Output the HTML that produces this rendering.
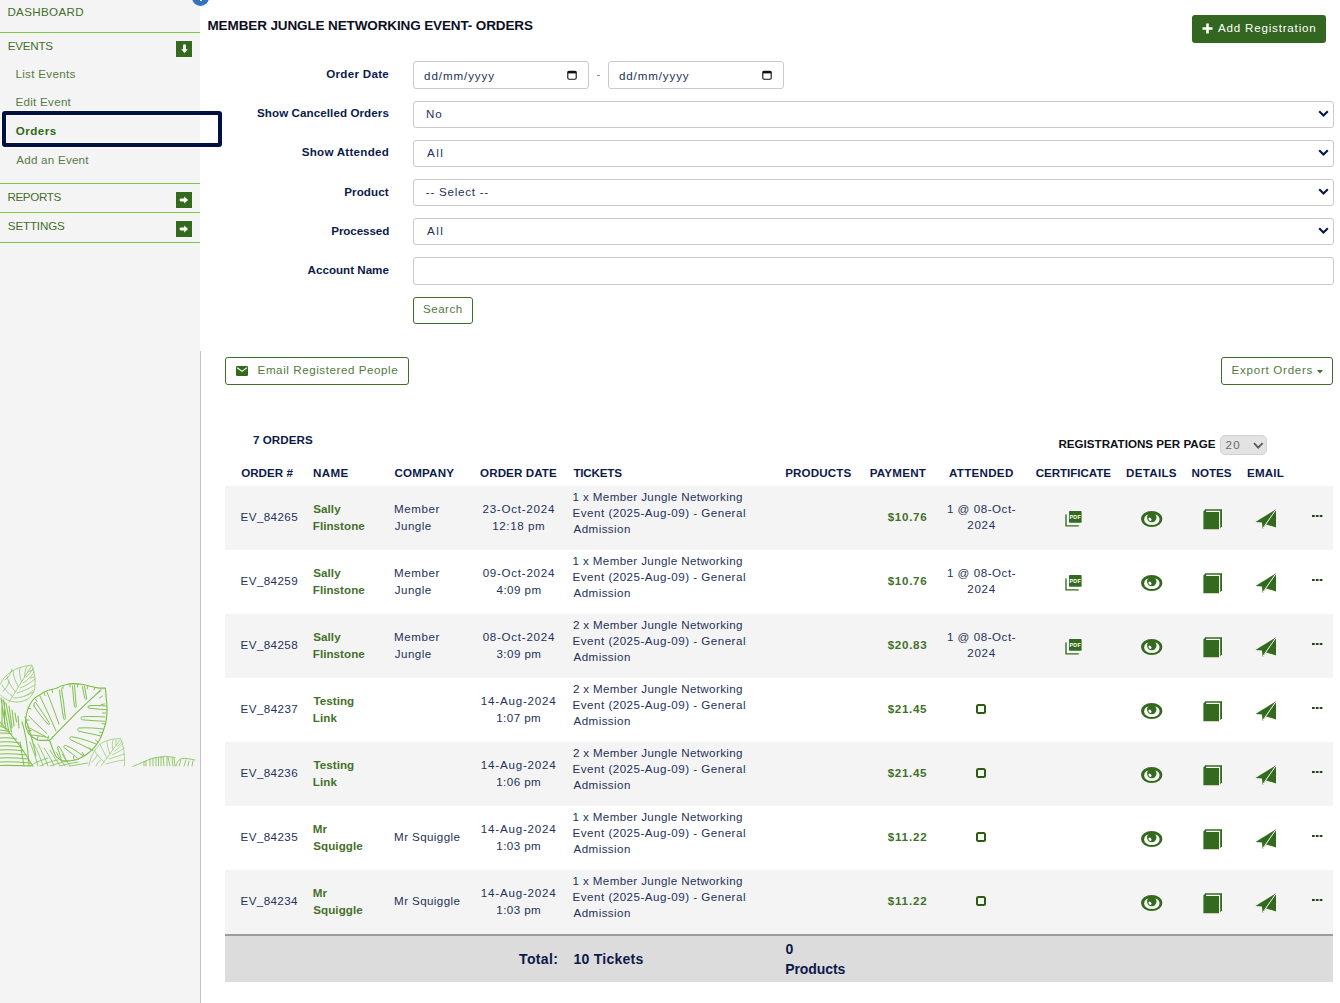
<!DOCTYPE html>
<html><head><meta charset="utf-8">
<style>
*{box-sizing:border-box;margin:0;padding:0}
html,body{width:1340px;height:1003px;overflow:hidden;background:#fff;font-family:"Liberation Sans",sans-serif}
.a{position:absolute}
.t{position:absolute;line-height:1;white-space:pre}
.sl{position:absolute;left:0;width:200px;height:1px;background:#84c344}
.si{position:absolute;left:176px;width:16px;height:16px;background:#336a1e}
.in{position:absolute;left:413px;border:1px solid #cacaca;border-radius:3px;background:#fff}
.bo{position:absolute;border:1px solid #3f6e2a;border-radius:3px;background:#fff}
</style></head><body>
<div class="a" style="left:0;top:0;width:200px;height:1003px;background:#f4f4f4"></div>
<div class="sl" style="top:32px"></div>
<div class="si" style="top:41px"><svg width="16" height="16" viewBox="0 0 16 16"><path d="M8.5 4.6V9.2" stroke="#fff" stroke-width="2.8" stroke-linecap="round"/><path d="M5.2 8.3L8.5 12L11.8 8.3Z" fill="#fff"/></svg></div>
<div class="sl" style="top:183px"></div>
<div class="si" style="top:192px"><svg width="16" height="16" viewBox="0 0 16 16"><path d="M5 8H9.2" stroke="#fff" stroke-width="2.9" stroke-linecap="round"/><path d="M8.2 4.6L12 8L8.2 11.4Z" fill="#fff"/></svg></div>
<div class="sl" style="top:212px"></div>
<div class="si" style="top:221px"><svg width="16" height="16" viewBox="0 0 16 16"><path d="M5 8H9.2" stroke="#fff" stroke-width="2.9" stroke-linecap="round"/><path d="M8.2 4.6L12 8L8.2 11.4Z" fill="#fff"/></svg></div>
<div class="sl" style="top:242px"></div>
<svg class="a" style="left:0;top:650px" width="200" height="118" viewBox="0 650 200 118">
<defs><clipPath id="lc"><rect x="0" y="650" width="200" height="116.8"/></clipPath></defs>
<g clip-path="url(#lc)" fill="none" stroke-linecap="round" stroke-linejoin="round">
<!-- small top-left leaf -->
<g stroke="#94cc6c" stroke-width="0.85">
<path d="M0.5 684C4 675 14 667 31.7 665C34.5 671 36 681 34.5 690C32 698 24 702 17 702C10 702 4 699 0.5 695"/>
<path d="M9 702L31.5 666"/>
<path d="M13 697C8 693 4 689 2 685M15.5 692C11 687 8 681 7 676M18.5 687C15 681 13 675 13 670.5M21.5 682C20 677 19 672 20 668M24.5 677C25 673 25 669 27 666.5"/>
<path d="M14 698C20 698 27 696 33.5 692M17 693C23 691 29 689 34.5 685M20 688C26 686 30 683 35 679M23 683C28 680 31 677 34 672M26 677C30 674 32 671 33 668"/>
<path d="M3 691C6 689 8 686 9 681M5 680C9 677 11 673 12 669M25 696C28 694 31 693 33 690M30 678L34 677M28 672L33 670"/>
</g>
<!-- fern fronds left -->
<g stroke="#80c24c" stroke-width="1.1">
<path d="M0 722C12 735 24 750 33 766.6"/>
<path d="M1 698C3 712 5 722 6 730M3.5 700C5 712 7 722 9 732M6 703C8 714 10 724 11.5 732M9 706L12 728M12 710L14 726M15 713L16.5 722M2 700V726M4.5 702V724M18 716L19 728"/>
<path d="M0 733C5 733 9 733 12 734M0 738C6 737.5 12 738 16.5 739M0 742C7 741.5 14 742 19.5 743M0 746C7 745.5 15 746 22 747M0 750C8 749.5 16 750 24 751M0 754C8 753.5 17 754 26.5 755M0 758C9 757.5 18 758 28.5 759M0 762C9 761.5 19 762 30.5 763M0 765.5C10 765 20 765.5 32 766"/>
<path d="M0 726L7 729M0 730L10 731.5"/>
<path d="M22 722C26 734 28 748 29 766M25 717C29 728 33 742 36 756M20 742L24 766"/>
</g>
<g stroke="#86c55a" stroke-width="0.9">
<path d="M30 742C33 750 36 758 38 766M34 744C38 752 41 759 43 766M38 744C42 752 46 760 48 766M44 748C48 754 52 760 54 766M50 750C53 756 57 761 60 766M56 752C59 757 62 762 65 766M62 754C65 759 68 763 70 766"/>
<path d="M30 766C36 762 42 760 48 758M40 766C46 763 52 761 58 760M50 766C56 764 62 762 68 761M60 766C66 764 72 763 78 762M70 766C76 765 82 764 88 763"/>
</g>
<!-- big monstera outline -->
<g stroke="#7bbf48" stroke-width="1.15">
<path d="M53.2 736.6C52 738.5 50.5 739.8 49.6 740.1C45 740.5 41 740.5 38 740.1C34 738.5 31 736.5 29 733.9C27 730.5 26 728 25.4 724.9C25.3 720 26 715 27.2 711.4C29 705.5 31.5 701 34.4 698.4C36 697 37.5 696 39.3 695.3C41.5 693.5 44 692 46.9 690.8C50 689.7 53 689 55.9 688.5C59 686.5 62.5 685.3 66.7 684.5C69 684 71.5 683.7 73.9 683.6C77 683.6 80 684 82.8 684.5C85.5 685 87.8 685.6 90 686.3C93 687 96 687.6 99 688.1C101 688.1 103 688 105.3 688.1C105.8 691.5 106 695 106.2 698C106.8 702 107 706 107.1 709.6C107 713.5 106.8 717 106.2 720.4C105.5 724 104.6 727.2 103.5 730.3C102.4 733.5 101.3 736.5 99.9 739.2C98 742.5 96 745.5 93.6 748.2C91.5 750.6 89 752.7 86.4 754.5C84 756.3 81 757.8 78.3 759C75.5 760 73 760.6 70.3 760.8C67.5 761 65 761 62.2 760.8C60 759.5 57.5 758 55.9 756.3C53.5 752 51.5 746 49.6 740.1"/>
<path d="M53.2 736.6C67 722 83 706 100.8 689.9"/>
</g>
<!-- fenestrations -->
<g stroke="#80c14e" stroke-width="1">
<path d="M34 706C38 712 43 719 48 724C49.5 725.5 50 724 49 722.5C45 716 40 709 36 703C35 701.5 33.5 703 34 706Z"/>
<path d="M40 696C45 707 51 719 56 731"/>
<path d="M47 692C51 702 55 713 59 724"/>
<path d="M59.5 690C60.5 699 62 709 63.5 718C64 720.5 65.5 720 65.3 717.5C64.5 708 63 698 61.5 689"/>
<path d="M72.5 686C73 692 73.5 700 74.5 706.5C75 708 76.5 708 76.2 706C75.5 699 75 692 74.5 685.5"/>
<path d="M82.5 686.5C83 690 84 695 85 698.5C85.5 700 87 699.5 86.6 698C86 694 85 690 84.5 686"/>
<path d="M106 706C100 705.5 94 705.3 89 705.8C87.5 706 87.5 708 89 708.2C95 708.8 100.5 709.4 106.5 709.8"/>
<path d="M105 717C98 716.5 90 716.2 82.5 716.8C80.5 717 80.5 719.5 82.5 719.8C90 720.5 98 721 104.5 721.3"/>
<path d="M103 729C96 728 87 727.5 79 728C77 728.3 77 730.8 79 731.3C87 733 95 734.5 101 736"/>
<path d="M96 744C89 741 80 738 72 736.8C69.5 736.5 69 739 71 740C79 743.5 87 747.5 93 750.5"/>
<path d="M83 756C78 752 72 748 66 745.5C64 744.8 63 747 64.5 748C70 752 75 756 78.5 759"/>
<path d="M66 760C64 755 62 751 59.5 747C58.5 745.5 57 746.5 57.5 748C59 752 60.5 756 61.5 760.5"/>
<path d="M29 716C34 722 41 728 47 733.5M27.5 727C33 730 39 733 45.5 736.5M30.5 735C36 735.5 42 736 48 737.5"/>
<path d="M100 691L98 693.5M102.5 696L99.5 698M104.5 704L101.5 704.5M105.5 713L102.5 713M105 724L102 723.5M102.5 733L99.5 732M98 742L95.5 740M91 750L89 747.5M84 755.5L82.5 752.5M74 759.5L73.5 756.5M48 739L48.5 736M37 739L38.5 736M28 731L31 730.5M26 720L29 720M28 708L31 709M35.5 699L37 701.5M44 692.5L45 695.5M52 689.5L52.5 692.5M63 685.5L63 688.5M70 684L70 687M78 684L77.5 687M88 685.8L87 688.8M95 687.3L94 690"/>
</g>
<!-- lower right leaf -->
<g stroke="#9bcf77" stroke-width="0.8">
<path d="M89 766C90 758 94 750 100 744C106 740 114 738.5 120.5 738.5C123 745 125 752 124.5 766"/>
<path d="M101 766L120 740"/>
<path d="M104 762C100 758 96 754 94 750M107 758C104 752 101 748 100 744M110 754C108 749 107 745 107 741M113 750C112 746 112 743 113 740M116 746L116 739.5"/>
<path d="M106 764C112 762 118 761 124.5 760M109 759C114 757 119 756 124.5 754M112 755C116 753 120 751 124.5 748M115 751C118 748 121 746 123.5 743M118 746L122.5 741"/>
<path d="M92 762C94 760 96 758 97 755M96 766C97 763 99 761 101 760"/>
</g>
<!-- palm fronds bottom -->
<g stroke="#86c458" stroke-width="0.9">
<path d="M132.4 766.6C140 764 146 760 154 758C162 756 170 756.5 175 757.5"/>
<path d="M144 766V762M146 766V761M150 766V759M153 766V758.5M156 766V758M158.5 766V757.5M161 766V757M164 766L163 757M167 766L167 758M170 766L168 757M173 766L172 758M175 766L174 758"/>
<path d="M176 766C177 762 179 759 182 758.5C186 758 190 759 194.6 760"/>
<path d="M179 766L181 760M184 766L186 760M188 766L189 761M192 766L193 761"/>
</g>
</g>
</svg>

<div class="a" style="left:1px;top:110px;width:222px;height:38px;border:1px solid #fff;border-radius:4px"></div>
<div class="a" style="left:2px;top:111px;width:220px;height:36px;border:4px solid #001040;border-radius:3px"></div>
<div class="a" style="left:6px;top:115px;width:212px;height:28px;border:1px solid #fff"></div>
<div class="a" style="left:191.6px;top:-11.6px;width:17.6px;height:17.6px;border-radius:50%;background:#3273bc"></div>
<div class="a" style="left:199.8px;top:0;width:2.2px;height:1.1px;background:#fff"></div>
<div class="a" style="left:200px;top:351px;width:1px;height:652px;background:#c2c2c2"></div>

<div class="a" style="left:1192px;top:15px;width:134px;height:28px;background:#336620;border-radius:3px"></div>
<svg class="a" style="left:1202px;top:23px" width="11" height="11" viewBox="0 0 11 11"><path d="M5.5 0.5V10.5M0.5 5.5H10.5" stroke="#fff" stroke-width="2.6"/></svg>

<div class="in" style="top:61px;width:176px;height:28px"></div>
<svg class="a" style="left:567px;top:69.5px" width="10" height="10" viewBox="0 0 10 10"><rect x="0.8" y="1.4" width="8.4" height="7.8" rx="1.2" fill="none" stroke="#111" stroke-width="1.1"/><rect x="0.8" y="1.0" width="8.4" height="2.4" fill="#111"/></svg>
<div class="a" style="left:596.5px;top:74.5px;width:3.4px;height:1.2px;background:#8090b0"></div>
<div class="in" style="top:61px;left:608px;width:176px;height:28px"></div>
<svg class="a" style="left:761.5px;top:69.5px" width="10" height="10" viewBox="0 0 10 10"><rect x="0.8" y="1.4" width="8.4" height="7.8" rx="1.2" fill="none" stroke="#111" stroke-width="1.1"/><rect x="0.8" y="1.0" width="8.4" height="2.4" fill="#111"/></svg>
<div class="in" style="top:101px;width:921px;height:27px"></div>
<svg class="a" style="left:1318px;top:110.1px" width="11" height="8" viewBox="0 0 11 8"><path d="M1.2 1.2L5.5 5.6L9.8 1.2" fill="none" stroke="#0a1848" stroke-width="2.1"/></svg>
<div class="in" style="top:140px;width:921px;height:27px"></div>
<svg class="a" style="left:1318px;top:149.1px" width="11" height="8" viewBox="0 0 11 8"><path d="M1.2 1.2L5.5 5.6L9.8 1.2" fill="none" stroke="#0a1848" stroke-width="2.1"/></svg>
<div class="in" style="top:179px;width:921px;height:27px"></div>
<svg class="a" style="left:1318px;top:188.1px" width="11" height="8" viewBox="0 0 11 8"><path d="M1.2 1.2L5.5 5.6L9.8 1.2" fill="none" stroke="#0a1848" stroke-width="2.1"/></svg>
<div class="in" style="top:218px;width:921px;height:27px"></div>
<svg class="a" style="left:1318px;top:227.1px" width="11" height="8" viewBox="0 0 11 8"><path d="M1.2 1.2L5.5 5.6L9.8 1.2" fill="none" stroke="#0a1848" stroke-width="2.1"/></svg>
<div class="in" style="top:257px;width:921px;height:28px"></div>
<div class="bo" style="left:413px;top:297px;width:60px;height:27px"></div>

<div class="bo" style="left:225px;top:357px;width:184px;height:28px"></div>
<svg class="a" style="left:236.4px;top:365.7px" width="12" height="10" viewBox="0 0 12 10"><rect x="0" y="0" width="12" height="10" rx="1.2" fill="#336a1d"/><path d="M1.2 1.8L6 5.4L10.8 1.8" fill="none" stroke="#fff" stroke-width="1.1"/></svg>
<div class="bo" style="left:1221px;top:357px;width:112px;height:28px"></div>
<svg class="a" style="left:1316.5px;top:369.8px" width="6" height="4" viewBox="0 0 6 4"><path d="M0 0H6L3 3.4Z" fill="#3f6e2a"/></svg>

<div class="a" style="left:1220px;top:435px;width:47px;height:20px;background:#e3e3e3;border:1px solid #d2d2d2;border-radius:5px"></div>
<svg class="a" style="left:1252.5px;top:441.5px" width="11" height="8" viewBox="0 0 11 8"><path d="M1 1.2L5.2 5.6L9.6 1.2" fill="none" stroke="#5a5a5a" stroke-width="1.9"/></svg>

<div class="a" style="left:225px;top:486px;width:1108px;height:64px;background:#f4f4f4"></div>
<div class="a" style="left:225px;top:614px;width:1108px;height:64px;background:#f4f4f4"></div>
<div class="a" style="left:225px;top:742px;width:1108px;height:64px;background:#f4f4f4"></div>
<div class="a" style="left:225px;top:870px;width:1108px;height:64px;background:#f4f4f4"></div>
<svg class="a" style="left:1065px;top:510.5px" width="18" height="17" viewBox="0 0 18 17">
<path d="M1 3.6V14.8H13.8" fill="none" stroke="#336a1d" stroke-width="1.35"/>
<rect x="4" y="0" width="12.6" height="11.8" rx="0.8" fill="#336a1d"/>
<text x="10.3" y="8.3" font-family="Liberation Sans" font-weight="bold" font-size="5.4" fill="#fff" text-anchor="middle" letter-spacing="0.3">PDF</text>
</svg>
<svg class="a" style="left:1140.8px;top:510.8px" width="22" height="17" viewBox="0 0 22 17">
<path fill-rule="evenodd" fill="#336a1d" d="M0 8A10.7 8 0 1 0 21.4 8A10.7 8 0 1 0 0 8ZM3.1 8.4A7.75 5.7 0 1 0 18.6 8.4A7.75 5.7 0 1 0 3.1 8.4Z"/>
<circle cx="10.75" cy="6.6" r="4.7" fill="#336a1d"/>
<ellipse cx="9" cy="8.3" rx="1.25" ry="1.9" transform="rotate(-38 9 8.3)" fill="#fff"/>
</svg>
<svg class="a" style="left:1203.2px;top:508.8px" width="20" height="21" viewBox="0 0 20 21">
<path d="M2.3 0.3H19V17.3L16.2 20.3H0.4V2.4Z" fill="#336a1d"/>
<path d="M3.2 2.4H16.6V20" fill="none" stroke="#fff" stroke-width="1.1"/>
</svg>
<svg class="a" style="left:1255.4px;top:508.6px" width="22" height="21" viewBox="0 0 22 21">
<path d="M21 0.3L0.4 13L7 13.4L7.6 20.2L11.2 15.4L21 18.5Z" fill="#336a1d"/>
<path d="M7.8 19.5L20.8 0.8" fill="none" stroke="#fff" stroke-width="1"/>
</svg>
<svg class="a" style="left:1311.5px;top:514.9px" width="11" height="3" viewBox="0 0 11 3"><path d="M0 0H2.7V2H0ZM3.85 0H6.55V2H3.85ZM7.7 0H10.4V2H7.7Z" fill="#22461a"/></svg>
<svg class="a" style="left:1065px;top:574.5px" width="18" height="17" viewBox="0 0 18 17">
<path d="M1 3.6V14.8H13.8" fill="none" stroke="#336a1d" stroke-width="1.35"/>
<rect x="4" y="0" width="12.6" height="11.8" rx="0.8" fill="#336a1d"/>
<text x="10.3" y="8.3" font-family="Liberation Sans" font-weight="bold" font-size="5.4" fill="#fff" text-anchor="middle" letter-spacing="0.3">PDF</text>
</svg>
<svg class="a" style="left:1140.8px;top:574.8px" width="22" height="17" viewBox="0 0 22 17">
<path fill-rule="evenodd" fill="#336a1d" d="M0 8A10.7 8 0 1 0 21.4 8A10.7 8 0 1 0 0 8ZM3.1 8.4A7.75 5.7 0 1 0 18.6 8.4A7.75 5.7 0 1 0 3.1 8.4Z"/>
<circle cx="10.75" cy="6.6" r="4.7" fill="#336a1d"/>
<ellipse cx="9" cy="8.3" rx="1.25" ry="1.9" transform="rotate(-38 9 8.3)" fill="#fff"/>
</svg>
<svg class="a" style="left:1203.2px;top:572.8px" width="20" height="21" viewBox="0 0 20 21">
<path d="M2.3 0.3H19V17.3L16.2 20.3H0.4V2.4Z" fill="#336a1d"/>
<path d="M3.2 2.4H16.6V20" fill="none" stroke="#fff" stroke-width="1.1"/>
</svg>
<svg class="a" style="left:1255.4px;top:572.6px" width="22" height="21" viewBox="0 0 22 21">
<path d="M21 0.3L0.4 13L7 13.4L7.6 20.2L11.2 15.4L21 18.5Z" fill="#336a1d"/>
<path d="M7.8 19.5L20.8 0.8" fill="none" stroke="#fff" stroke-width="1"/>
</svg>
<svg class="a" style="left:1311.5px;top:578.9px" width="11" height="3" viewBox="0 0 11 3"><path d="M0 0H2.7V2H0ZM3.85 0H6.55V2H3.85ZM7.7 0H10.4V2H7.7Z" fill="#22461a"/></svg>
<svg class="a" style="left:1065px;top:638.5px" width="18" height="17" viewBox="0 0 18 17">
<path d="M1 3.6V14.8H13.8" fill="none" stroke="#336a1d" stroke-width="1.35"/>
<rect x="4" y="0" width="12.6" height="11.8" rx="0.8" fill="#336a1d"/>
<text x="10.3" y="8.3" font-family="Liberation Sans" font-weight="bold" font-size="5.4" fill="#fff" text-anchor="middle" letter-spacing="0.3">PDF</text>
</svg>
<svg class="a" style="left:1140.8px;top:638.8px" width="22" height="17" viewBox="0 0 22 17">
<path fill-rule="evenodd" fill="#336a1d" d="M0 8A10.7 8 0 1 0 21.4 8A10.7 8 0 1 0 0 8ZM3.1 8.4A7.75 5.7 0 1 0 18.6 8.4A7.75 5.7 0 1 0 3.1 8.4Z"/>
<circle cx="10.75" cy="6.6" r="4.7" fill="#336a1d"/>
<ellipse cx="9" cy="8.3" rx="1.25" ry="1.9" transform="rotate(-38 9 8.3)" fill="#fff"/>
</svg>
<svg class="a" style="left:1203.2px;top:636.8px" width="20" height="21" viewBox="0 0 20 21">
<path d="M2.3 0.3H19V17.3L16.2 20.3H0.4V2.4Z" fill="#336a1d"/>
<path d="M3.2 2.4H16.6V20" fill="none" stroke="#fff" stroke-width="1.1"/>
</svg>
<svg class="a" style="left:1255.4px;top:636.6px" width="22" height="21" viewBox="0 0 22 21">
<path d="M21 0.3L0.4 13L7 13.4L7.6 20.2L11.2 15.4L21 18.5Z" fill="#336a1d"/>
<path d="M7.8 19.5L20.8 0.8" fill="none" stroke="#fff" stroke-width="1"/>
</svg>
<svg class="a" style="left:1311.5px;top:642.9px" width="11" height="3" viewBox="0 0 11 3"><path d="M0 0H2.7V2H0ZM3.85 0H6.55V2H3.85ZM7.7 0H10.4V2H7.7Z" fill="#22461a"/></svg>
<div class="a" style="left:975.6px;top:704px;width:10px;height:10px;border:2px solid #2a5c12;border-radius:2.5px"></div>
<svg class="a" style="left:1140.8px;top:702.8px" width="22" height="17" viewBox="0 0 22 17">
<path fill-rule="evenodd" fill="#336a1d" d="M0 8A10.7 8 0 1 0 21.4 8A10.7 8 0 1 0 0 8ZM3.1 8.4A7.75 5.7 0 1 0 18.6 8.4A7.75 5.7 0 1 0 3.1 8.4Z"/>
<circle cx="10.75" cy="6.6" r="4.7" fill="#336a1d"/>
<ellipse cx="9" cy="8.3" rx="1.25" ry="1.9" transform="rotate(-38 9 8.3)" fill="#fff"/>
</svg>
<svg class="a" style="left:1203.2px;top:700.8px" width="20" height="21" viewBox="0 0 20 21">
<path d="M2.3 0.3H19V17.3L16.2 20.3H0.4V2.4Z" fill="#336a1d"/>
<path d="M3.2 2.4H16.6V20" fill="none" stroke="#fff" stroke-width="1.1"/>
</svg>
<svg class="a" style="left:1255.4px;top:700.6px" width="22" height="21" viewBox="0 0 22 21">
<path d="M21 0.3L0.4 13L7 13.4L7.6 20.2L11.2 15.4L21 18.5Z" fill="#336a1d"/>
<path d="M7.8 19.5L20.8 0.8" fill="none" stroke="#fff" stroke-width="1"/>
</svg>
<svg class="a" style="left:1311.5px;top:706.9px" width="11" height="3" viewBox="0 0 11 3"><path d="M0 0H2.7V2H0ZM3.85 0H6.55V2H3.85ZM7.7 0H10.4V2H7.7Z" fill="#22461a"/></svg>
<div class="a" style="left:975.6px;top:768px;width:10px;height:10px;border:2px solid #2a5c12;border-radius:2.5px"></div>
<svg class="a" style="left:1140.8px;top:766.8px" width="22" height="17" viewBox="0 0 22 17">
<path fill-rule="evenodd" fill="#336a1d" d="M0 8A10.7 8 0 1 0 21.4 8A10.7 8 0 1 0 0 8ZM3.1 8.4A7.75 5.7 0 1 0 18.6 8.4A7.75 5.7 0 1 0 3.1 8.4Z"/>
<circle cx="10.75" cy="6.6" r="4.7" fill="#336a1d"/>
<ellipse cx="9" cy="8.3" rx="1.25" ry="1.9" transform="rotate(-38 9 8.3)" fill="#fff"/>
</svg>
<svg class="a" style="left:1203.2px;top:764.8px" width="20" height="21" viewBox="0 0 20 21">
<path d="M2.3 0.3H19V17.3L16.2 20.3H0.4V2.4Z" fill="#336a1d"/>
<path d="M3.2 2.4H16.6V20" fill="none" stroke="#fff" stroke-width="1.1"/>
</svg>
<svg class="a" style="left:1255.4px;top:764.6px" width="22" height="21" viewBox="0 0 22 21">
<path d="M21 0.3L0.4 13L7 13.4L7.6 20.2L11.2 15.4L21 18.5Z" fill="#336a1d"/>
<path d="M7.8 19.5L20.8 0.8" fill="none" stroke="#fff" stroke-width="1"/>
</svg>
<svg class="a" style="left:1311.5px;top:770.9px" width="11" height="3" viewBox="0 0 11 3"><path d="M0 0H2.7V2H0ZM3.85 0H6.55V2H3.85ZM7.7 0H10.4V2H7.7Z" fill="#22461a"/></svg>
<div class="a" style="left:975.6px;top:832px;width:10px;height:10px;border:2px solid #2a5c12;border-radius:2.5px"></div>
<svg class="a" style="left:1140.8px;top:830.8px" width="22" height="17" viewBox="0 0 22 17">
<path fill-rule="evenodd" fill="#336a1d" d="M0 8A10.7 8 0 1 0 21.4 8A10.7 8 0 1 0 0 8ZM3.1 8.4A7.75 5.7 0 1 0 18.6 8.4A7.75 5.7 0 1 0 3.1 8.4Z"/>
<circle cx="10.75" cy="6.6" r="4.7" fill="#336a1d"/>
<ellipse cx="9" cy="8.3" rx="1.25" ry="1.9" transform="rotate(-38 9 8.3)" fill="#fff"/>
</svg>
<svg class="a" style="left:1203.2px;top:828.8px" width="20" height="21" viewBox="0 0 20 21">
<path d="M2.3 0.3H19V17.3L16.2 20.3H0.4V2.4Z" fill="#336a1d"/>
<path d="M3.2 2.4H16.6V20" fill="none" stroke="#fff" stroke-width="1.1"/>
</svg>
<svg class="a" style="left:1255.4px;top:828.6px" width="22" height="21" viewBox="0 0 22 21">
<path d="M21 0.3L0.4 13L7 13.4L7.6 20.2L11.2 15.4L21 18.5Z" fill="#336a1d"/>
<path d="M7.8 19.5L20.8 0.8" fill="none" stroke="#fff" stroke-width="1"/>
</svg>
<svg class="a" style="left:1311.5px;top:834.9px" width="11" height="3" viewBox="0 0 11 3"><path d="M0 0H2.7V2H0ZM3.85 0H6.55V2H3.85ZM7.7 0H10.4V2H7.7Z" fill="#22461a"/></svg>
<div class="a" style="left:975.6px;top:896px;width:10px;height:10px;border:2px solid #2a5c12;border-radius:2.5px"></div>
<svg class="a" style="left:1140.8px;top:894.8px" width="22" height="17" viewBox="0 0 22 17">
<path fill-rule="evenodd" fill="#336a1d" d="M0 8A10.7 8 0 1 0 21.4 8A10.7 8 0 1 0 0 8ZM3.1 8.4A7.75 5.7 0 1 0 18.6 8.4A7.75 5.7 0 1 0 3.1 8.4Z"/>
<circle cx="10.75" cy="6.6" r="4.7" fill="#336a1d"/>
<ellipse cx="9" cy="8.3" rx="1.25" ry="1.9" transform="rotate(-38 9 8.3)" fill="#fff"/>
</svg>
<svg class="a" style="left:1203.2px;top:892.8px" width="20" height="21" viewBox="0 0 20 21">
<path d="M2.3 0.3H19V17.3L16.2 20.3H0.4V2.4Z" fill="#336a1d"/>
<path d="M3.2 2.4H16.6V20" fill="none" stroke="#fff" stroke-width="1.1"/>
</svg>
<svg class="a" style="left:1255.4px;top:892.6px" width="22" height="21" viewBox="0 0 22 21">
<path d="M21 0.3L0.4 13L7 13.4L7.6 20.2L11.2 15.4L21 18.5Z" fill="#336a1d"/>
<path d="M7.8 19.5L20.8 0.8" fill="none" stroke="#fff" stroke-width="1"/>
</svg>
<svg class="a" style="left:1311.5px;top:898.9px" width="11" height="3" viewBox="0 0 11 3"><path d="M0 0H2.7V2H0ZM3.85 0H6.55V2H3.85ZM7.7 0H10.4V2H7.7Z" fill="#22461a"/></svg>

<div class="a" style="left:225px;top:934px;width:1108px;height:48px;background:#dcdcdc;border-top:2px solid #9c9c9c"></div>
<div class="t" style="left:7.40px;top:6.28px;font-size:11.6px;color:#3f6e2b;letter-spacing:0.338px;">DASHBOARD</div>
<div class="t" style="left:7.70px;top:40.28px;font-size:11.6px;color:#3f6e2b;letter-spacing:-0.200px;">EVENTS</div>
<div class="t" style="left:15.40px;top:67.68px;font-size:11.6px;color:#577a44;letter-spacing:0.330px;">List Events</div>
<div class="t" style="left:15.40px;top:96.48px;font-size:11.6px;color:#577a44;letter-spacing:0.289px;">Edit Event</div>
<div class="t" style="left:15.70px;top:125.18px;font-size:11.6px;font-weight:bold;color:#2f6a16;letter-spacing:0.500px;">Orders</div>
<div class="t" style="left:16.30px;top:153.98px;font-size:11.6px;color:#577a44;letter-spacing:0.236px;">Add an Event</div>
<div class="t" style="left:7.40px;top:191.48px;font-size:11.6px;color:#3f6e2b;letter-spacing:-0.333px;">REPORTS</div>
<div class="t" style="left:7.80px;top:220.18px;font-size:11.6px;color:#3f6e2b;letter-spacing:-0.143px;">SETTINGS</div>
<div class="t" style="left:207.50px;top:18.87px;font-size:13.5px;font-weight:bold;color:#0d0f1f;letter-spacing:-0.122px;">MEMBER JUNGLE NETWORKING EVENT- ORDERS</div>
<div class="t" style="left:1218.00px;top:22.48px;font-size:11.6px;color:#ffffff;letter-spacing:0.800px;">Add Registration</div>
<div class="t" style="left:326.20px;top:68.28px;font-size:11.6px;font-weight:bold;color:#0c1a4b;letter-spacing:0.300px;">Order Date</div>
<div class="t" style="left:257.00px;top:107.48px;font-size:11.6px;font-weight:bold;color:#0c1a4b;letter-spacing:0.085px;">Show Cancelled Orders</div>
<div class="t" style="left:301.80px;top:146.48px;font-size:11.6px;font-weight:bold;color:#0c1a4b;letter-spacing:0.250px;">Show Attended</div>
<div class="t" style="left:344.30px;top:186.28px;font-size:11.6px;font-weight:bold;color:#0c1a4b;letter-spacing:0.083px;">Product</div>
<div class="t" style="left:331.30px;top:225.28px;font-size:11.6px;font-weight:bold;color:#0c1a4b;letter-spacing:-0.088px;">Processed</div>
<div class="t" style="left:307.60px;top:264.28px;font-size:11.6px;font-weight:bold;color:#0c1a4b;letter-spacing:0.009px;">Account Name</div>
<div class="t" style="left:424.10px;top:70.08px;font-size:11.6px;color:#24315b;letter-spacing:0.900px;">dd/mm/yyyy</div>
<div class="t" style="left:618.90px;top:70.08px;font-size:11.6px;color:#24315b;letter-spacing:0.878px;">dd/mm/yyyy</div>
<div class="t" style="left:426.10px;top:108.18px;font-size:11.6px;color:#24315b;letter-spacing:0.800px;">No</div>
<div class="t" style="left:427.00px;top:147.18px;font-size:11.6px;color:#24315b;letter-spacing:1.500px;">All</div>
<div class="t" style="left:425.80px;top:186.18px;font-size:11.6px;color:#24315b;letter-spacing:0.745px;">-- Select --</div>
<div class="t" style="left:427.00px;top:225.18px;font-size:11.6px;color:#24315b;letter-spacing:1.500px;">All</div>
<div class="t" style="left:423.00px;top:303.18px;font-size:11.6px;color:#55783f;letter-spacing:0.480px;">Search</div>
<div class="t" style="left:257.60px;top:364.18px;font-size:11.6px;color:#55783f;letter-spacing:0.568px;">Email Registered People</div>
<div class="t" style="left:1231.60px;top:363.98px;font-size:11.6px;color:#55783f;letter-spacing:0.717px;">Export Orders</div>
<div class="t" style="left:252.90px;top:433.58px;font-size:11.6px;font-weight:bold;color:#0c1a4b;letter-spacing:0.071px;">7 ORDERS</div>
<div class="t" style="left:1058.40px;top:438.18px;font-size:11.6px;font-weight:bold;color:#101018;letter-spacing:0.019px;">REGISTRATIONS PER PAGE</div>
<div class="t" style="left:1225.40px;top:439.08px;font-size:11.6px;color:#6a6a6a;letter-spacing:1.500px;">20</div>
<div class="t" style="left:241.20px;top:467.38px;font-size:11.6px;font-weight:bold;color:#0c1a4b;letter-spacing:0.017px;">ORDER #</div>
<div class="t" style="left:313.00px;top:467.38px;font-size:11.6px;font-weight:bold;color:#0c1a4b;letter-spacing:0.367px;">NAME</div>
<div class="t" style="left:394.60px;top:467.38px;font-size:11.6px;font-weight:bold;color:#0c1a4b;letter-spacing:0.150px;">COMPANY</div>
<div class="t" style="left:480.10px;top:467.38px;font-size:11.6px;font-weight:bold;color:#0c1a4b;letter-spacing:0.089px;">ORDER DATE</div>
<div class="t" style="left:573.40px;top:467.38px;font-size:11.6px;font-weight:bold;color:#0c1a4b;letter-spacing:-0.167px;">TICKETS</div>
<div class="t" style="left:785.20px;top:467.38px;font-size:11.6px;font-weight:bold;color:#0c1a4b;letter-spacing:0.143px;">PRODUCTS</div>
<div class="t" style="left:869.70px;top:467.38px;font-size:11.6px;font-weight:bold;color:#0c1a4b;letter-spacing:0.250px;">PAYMENT</div>
<div class="t" style="left:949.00px;top:467.38px;font-size:11.6px;font-weight:bold;color:#0c1a4b;letter-spacing:0.286px;">ATTENDED</div>
<div class="t" style="left:1035.70px;top:467.38px;font-size:11.6px;font-weight:bold;color:#0c1a4b;letter-spacing:-0.040px;">CERTIFICATE</div>
<div class="t" style="left:1126.10px;top:467.38px;font-size:11.6px;font-weight:bold;color:#0c1a4b;letter-spacing:0.283px;">DETAILS</div>
<div class="t" style="left:1191.60px;top:467.38px;font-size:11.6px;font-weight:bold;color:#0c1a4b;letter-spacing:-0.025px;">NOTES</div>
<div class="t" style="left:1247.00px;top:467.38px;font-size:11.6px;font-weight:bold;color:#0c1a4b;letter-spacing:0.200px;">EMAIL</div>
<div class="t" style="left:240.60px;top:511.38px;font-size:11.6px;color:#24315b;letter-spacing:0.414px;">EV_84265</div>
<div class="t" style="left:313.30px;top:503.38px;font-size:11.6px;font-weight:bold;color:#44702a;letter-spacing:0.058px;">Sally</div>
<div class="t" style="left:312.80px;top:519.58px;font-size:11.6px;font-weight:bold;color:#44702a;letter-spacing:0.054px;">Flinstone</div>
<div class="t" style="left:394.10px;top:503.38px;font-size:11.6px;color:#24315b;letter-spacing:0.544px;">Member</div>
<div class="t" style="left:394.80px;top:519.58px;font-size:11.6px;color:#24315b;letter-spacing:0.439px;">Jungle</div>
<div class="t" style="left:482.45px;top:503.38px;font-size:11.6px;color:#24315b;letter-spacing:0.750px;">23-Oct-2024</div>
<div class="t" style="left:492.30px;top:519.58px;font-size:11.6px;color:#24315b;letter-spacing:0.586px;">12:18 pm</div>
<div class="t" style="left:572.60px;top:491.38px;font-size:11.6px;color:#24315b;letter-spacing:0.374px;">1 x Member Jungle Networking</div>
<div class="t" style="left:572.60px;top:507.48px;font-size:11.6px;color:#24315b;letter-spacing:0.489px;">Event (2025-Aug-09) - General</div>
<div class="t" style="left:573.50px;top:523.38px;font-size:11.6px;color:#24315b;letter-spacing:0.432px;">Admission</div>
<div class="t" style="left:887.70px;top:511.18px;font-size:11.6px;font-weight:bold;color:#44702a;letter-spacing:0.700px;">$10.76</div>
<div class="t" style="left:946.90px;top:503.38px;font-size:11.6px;color:#24315b;letter-spacing:0.530px;">1 @ 08-Oct-</div>
<div class="t" style="left:967.20px;top:519.38px;font-size:11.6px;color:#24315b;letter-spacing:0.767px;">2024</div>
<div class="t" style="left:240.60px;top:575.38px;font-size:11.6px;color:#24315b;letter-spacing:0.414px;">EV_84259</div>
<div class="t" style="left:313.30px;top:567.38px;font-size:11.6px;font-weight:bold;color:#44702a;letter-spacing:0.058px;">Sally</div>
<div class="t" style="left:312.80px;top:583.58px;font-size:11.6px;font-weight:bold;color:#44702a;letter-spacing:0.054px;">Flinstone</div>
<div class="t" style="left:394.10px;top:567.38px;font-size:11.6px;color:#24315b;letter-spacing:0.544px;">Member</div>
<div class="t" style="left:394.80px;top:583.58px;font-size:11.6px;color:#24315b;letter-spacing:0.439px;">Jungle</div>
<div class="t" style="left:482.65px;top:567.38px;font-size:11.6px;color:#24315b;letter-spacing:0.730px;">09-Oct-2024</div>
<div class="t" style="left:496.56px;top:583.58px;font-size:11.6px;color:#24315b;letter-spacing:0.448px;">4:09 pm</div>
<div class="t" style="left:572.60px;top:555.38px;font-size:11.6px;color:#24315b;letter-spacing:0.374px;">1 x Member Jungle Networking</div>
<div class="t" style="left:572.60px;top:571.48px;font-size:11.6px;color:#24315b;letter-spacing:0.489px;">Event (2025-Aug-09) - General</div>
<div class="t" style="left:573.50px;top:587.38px;font-size:11.6px;color:#24315b;letter-spacing:0.432px;">Admission</div>
<div class="t" style="left:887.70px;top:575.18px;font-size:11.6px;font-weight:bold;color:#44702a;letter-spacing:0.700px;">$10.76</div>
<div class="t" style="left:946.90px;top:567.38px;font-size:11.6px;color:#24315b;letter-spacing:0.530px;">1 @ 08-Oct-</div>
<div class="t" style="left:967.20px;top:583.38px;font-size:11.6px;color:#24315b;letter-spacing:0.767px;">2024</div>
<div class="t" style="left:240.60px;top:639.38px;font-size:11.6px;color:#24315b;letter-spacing:0.414px;">EV_84258</div>
<div class="t" style="left:313.30px;top:631.38px;font-size:11.6px;font-weight:bold;color:#44702a;letter-spacing:0.058px;">Sally</div>
<div class="t" style="left:312.80px;top:647.58px;font-size:11.6px;font-weight:bold;color:#44702a;letter-spacing:0.054px;">Flinstone</div>
<div class="t" style="left:394.10px;top:631.38px;font-size:11.6px;color:#24315b;letter-spacing:0.544px;">Member</div>
<div class="t" style="left:394.80px;top:647.58px;font-size:11.6px;color:#24315b;letter-spacing:0.439px;">Jungle</div>
<div class="t" style="left:482.65px;top:631.38px;font-size:11.6px;color:#24315b;letter-spacing:0.730px;">08-Oct-2024</div>
<div class="t" style="left:496.46px;top:647.58px;font-size:11.6px;color:#24315b;letter-spacing:0.446px;">3:09 pm</div>
<div class="t" style="left:572.90px;top:619.38px;font-size:11.6px;color:#24315b;letter-spacing:0.363px;">2 x Member Jungle Networking</div>
<div class="t" style="left:572.60px;top:635.48px;font-size:11.6px;color:#24315b;letter-spacing:0.489px;">Event (2025-Aug-09) - General</div>
<div class="t" style="left:573.50px;top:651.38px;font-size:11.6px;color:#24315b;letter-spacing:0.432px;">Admission</div>
<div class="t" style="left:887.70px;top:639.18px;font-size:11.6px;font-weight:bold;color:#44702a;letter-spacing:0.700px;">$20.83</div>
<div class="t" style="left:946.90px;top:631.38px;font-size:11.6px;color:#24315b;letter-spacing:0.530px;">1 @ 08-Oct-</div>
<div class="t" style="left:967.20px;top:647.38px;font-size:11.6px;color:#24315b;letter-spacing:0.767px;">2024</div>
<div class="t" style="left:240.60px;top:703.38px;font-size:11.6px;color:#24315b;letter-spacing:0.429px;">EV_84237</div>
<div class="t" style="left:313.50px;top:695.38px;font-size:11.6px;font-weight:bold;color:#44702a;letter-spacing:0.057px;">Testing</div>
<div class="t" style="left:312.80px;top:711.58px;font-size:11.6px;font-weight:bold;color:#44702a;letter-spacing:0.066px;">Link</div>
<div class="t" style="left:480.75px;top:695.38px;font-size:11.6px;color:#24315b;letter-spacing:0.800px;">14-Aug-2024</div>
<div class="t" style="left:496.23px;top:711.58px;font-size:11.6px;color:#24315b;letter-spacing:0.440px;">1:07 pm</div>
<div class="t" style="left:572.90px;top:683.38px;font-size:11.6px;color:#24315b;letter-spacing:0.363px;">2 x Member Jungle Networking</div>
<div class="t" style="left:572.60px;top:699.48px;font-size:11.6px;color:#24315b;letter-spacing:0.489px;">Event (2025-Aug-09) - General</div>
<div class="t" style="left:573.50px;top:715.38px;font-size:11.6px;color:#24315b;letter-spacing:0.432px;">Admission</div>
<div class="t" style="left:887.70px;top:703.18px;font-size:11.6px;font-weight:bold;color:#44702a;letter-spacing:0.680px;">$21.45</div>
<div class="t" style="left:240.60px;top:767.38px;font-size:11.6px;color:#24315b;letter-spacing:0.414px;">EV_84236</div>
<div class="t" style="left:313.50px;top:759.38px;font-size:11.6px;font-weight:bold;color:#44702a;letter-spacing:0.057px;">Testing</div>
<div class="t" style="left:312.80px;top:775.58px;font-size:11.6px;font-weight:bold;color:#44702a;letter-spacing:0.066px;">Link</div>
<div class="t" style="left:480.75px;top:759.38px;font-size:11.6px;color:#24315b;letter-spacing:0.800px;">14-Aug-2024</div>
<div class="t" style="left:496.23px;top:775.58px;font-size:11.6px;color:#24315b;letter-spacing:0.440px;">1:06 pm</div>
<div class="t" style="left:572.90px;top:747.38px;font-size:11.6px;color:#24315b;letter-spacing:0.363px;">2 x Member Jungle Networking</div>
<div class="t" style="left:572.60px;top:763.48px;font-size:11.6px;color:#24315b;letter-spacing:0.489px;">Event (2025-Aug-09) - General</div>
<div class="t" style="left:573.50px;top:779.38px;font-size:11.6px;color:#24315b;letter-spacing:0.432px;">Admission</div>
<div class="t" style="left:887.70px;top:767.18px;font-size:11.6px;font-weight:bold;color:#44702a;letter-spacing:0.680px;">$21.45</div>
<div class="t" style="left:240.60px;top:831.38px;font-size:11.6px;color:#24315b;letter-spacing:0.414px;">EV_84235</div>
<div class="t" style="left:312.80px;top:823.38px;font-size:11.6px;font-weight:bold;color:#44702a;letter-spacing:0.114px;">Mr</div>
<div class="t" style="left:313.30px;top:839.58px;font-size:11.6px;font-weight:bold;color:#44702a;letter-spacing:0.059px;">Squiggle</div>
<div class="t" style="left:394.10px;top:831.38px;font-size:11.6px;color:#24315b;letter-spacing:0.396px;">Mr Squiggle</div>
<div class="t" style="left:480.75px;top:823.38px;font-size:11.6px;color:#24315b;letter-spacing:0.800px;">14-Aug-2024</div>
<div class="t" style="left:496.25px;top:839.58px;font-size:11.6px;color:#24315b;letter-spacing:0.433px;">1:03 pm</div>
<div class="t" style="left:572.60px;top:811.38px;font-size:11.6px;color:#24315b;letter-spacing:0.374px;">1 x Member Jungle Networking</div>
<div class="t" style="left:572.60px;top:827.48px;font-size:11.6px;color:#24315b;letter-spacing:0.489px;">Event (2025-Aug-09) - General</div>
<div class="t" style="left:573.50px;top:843.38px;font-size:11.6px;color:#24315b;letter-spacing:0.432px;">Admission</div>
<div class="t" style="left:887.70px;top:831.18px;font-size:11.6px;font-weight:bold;color:#44702a;letter-spacing:0.840px;">$11.22</div>
<div class="t" style="left:240.60px;top:895.38px;font-size:11.6px;color:#24315b;letter-spacing:0.386px;">EV_84234</div>
<div class="t" style="left:312.80px;top:887.38px;font-size:11.6px;font-weight:bold;color:#44702a;letter-spacing:0.114px;">Mr</div>
<div class="t" style="left:313.30px;top:903.58px;font-size:11.6px;font-weight:bold;color:#44702a;letter-spacing:0.059px;">Squiggle</div>
<div class="t" style="left:394.10px;top:895.38px;font-size:11.6px;color:#24315b;letter-spacing:0.396px;">Mr Squiggle</div>
<div class="t" style="left:480.75px;top:887.38px;font-size:11.6px;color:#24315b;letter-spacing:0.800px;">14-Aug-2024</div>
<div class="t" style="left:496.25px;top:903.58px;font-size:11.6px;color:#24315b;letter-spacing:0.433px;">1:03 pm</div>
<div class="t" style="left:572.60px;top:875.38px;font-size:11.6px;color:#24315b;letter-spacing:0.374px;">1 x Member Jungle Networking</div>
<div class="t" style="left:572.60px;top:891.48px;font-size:11.6px;color:#24315b;letter-spacing:0.489px;">Event (2025-Aug-09) - General</div>
<div class="t" style="left:573.50px;top:907.38px;font-size:11.6px;color:#24315b;letter-spacing:0.432px;">Admission</div>
<div class="t" style="left:887.70px;top:895.18px;font-size:11.6px;font-weight:bold;color:#44702a;letter-spacing:0.840px;">$11.22</div>
<div class="t" style="left:519.10px;top:951.85px;font-size:14px;font-weight:bold;color:#0c1a4b;letter-spacing:0.340px;">Total:</div>
<div class="t" style="left:573.40px;top:951.85px;font-size:14px;font-weight:bold;color:#0c1a4b;letter-spacing:0.267px;">10 Tickets</div>
<div class="t" style="left:785.60px;top:941.85px;font-size:14px;font-weight:bold;color:#0c1a4b;">0</div>
<div class="t" style="left:785.20px;top:961.55px;font-size:14px;font-weight:bold;color:#0c1a4b;letter-spacing:-0.071px;">Products</div>
</body></html>
